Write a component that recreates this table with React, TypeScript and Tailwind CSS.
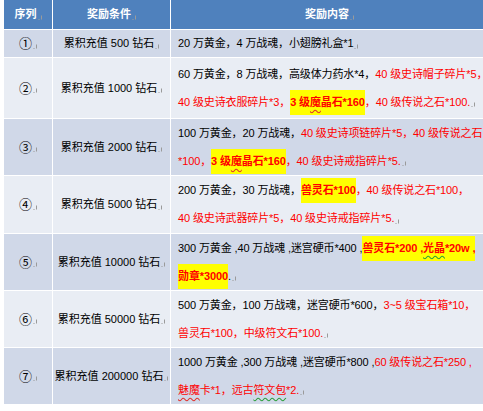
import React from 'react';

type Seg = { t: string; k?: 'r' | 'h'; u?: 'r' | 'g' };

const R = (t: string, u?: 'r' | 'g'): Seg => ({ t, k: 'r', u });
const H = (t: string, u?: 'r' | 'g'): Seg => ({ t, k: 'h', u });
const B = (t: string, u?: 'r' | 'g'): Seg => ({ t, u });

type Row = { no: string; cond: string; lines: Seg[][]; h: string };

const rows: Row[] = [
    { no: '①', cond: '累积充值 500 钻石', h: 'h-[27px]', lines: [[B('20 万黄金，4 万战魂，小翅膀礼盒*1')]] },
    {
        no: '②',
        cond: '累积充值 1000 钻石',
        h: 'h-[60px]',
        lines: [
            [B('60 万黄金，8 万战魂，高级体力药水*4，'), R('40 级史诗帽子碎片*5，')],
            [R('40 级史诗衣服碎片*3，'), H('3 级'), H('魔', 'r'), H('晶石*160'), R('，40 级传说之石*100')],
        ],
    },
    {
        no: '③',
        cond: '累积充值 2000 钻石',
        h: 'h-[56px]',
        lines: [
            [B('100 万黄金，20 万战魂，'), R('40 级史诗项链碎片*5，40 级传说之石')],
            [R('*100，'), H('3 级'), H('魔', 'r'), H('晶石*160'), R('，40 级史诗戒指碎片*5')],
        ],
    },
    {
        no: '④',
        cond: '累积充值 5000 钻石',
        h: 'h-[57px]',
        lines: [
            [B('200 万黄金，30 万战魂，'), H('兽灵石*100'), R('，40 级传说之石*100，')],
            [R('40 级史诗武器碎片*5，40 级史诗戒指碎片*5')],
        ],
    },
    {
        no: '⑤',
        cond: '累积充值 10000 钻石',
        h: 'h-[56px]',
        lines: [
            [B('300 万黄金 ,40 万战魂 ,迷宫硬币*400 ,'), H('兽灵石*200 ,'), H('光晶', 'g'), H('*20w ,')],
            [H('勋章*3000')],
        ],
    },
    {
        no: '⑥',
        cond: '累积充值 50000 钻石',
        h: 'h-[56px]',
        lines: [
            [B('500 万黄金，100 万战魂，迷宫硬币*600，'), R('3~5 级宝石箱*10，')],
            [R('兽灵石*100，中级符文石*100')],
        ],
    },
    {
        no: '⑦',
        cond: '累积充值 200000 钻石',
        h: 'h-[56px]',
        lines: [
            [B('1000 万黄金 ,300 万战魂 ,迷宫硬币*800 ,'), R('60 级传说之石*250 ,')],
            [R('魅魔', 'r'), R('卡*1，远古'), R('符文包', 'g'), R('*2')],
        ],
    },
];

function Mark() {
    return (
        <svg width="4" height="5" viewBox="0 0 4 5" className="ml-px mt-[5px] shrink-0">
            <path d="M3.5 0.5V4.5M0.5 4.5H1.5" stroke="#9a9a9a" strokeWidth="1" fill="none" />
        </svg>
    );
}

function Piece({ s }: { s: Seg }) {
    const under =
        s.u === 'r'
            ? 'underline decoration-wavy decoration-[#e0302a] underline-offset-[3px]'
            : s.u === 'g'
              ? 'underline decoration-wavy decoration-[#2a9d3a] underline-offset-[3px]'
              : '';
    if (s.k === 'h') {
        return <span className={`inline-block h-[25px] leading-[25px] bg-[#ffff00] font-bold text-[#ff0000] ${under}`}>{s.t}</span>;
    }
    if (s.k === 'r') {
        return <span className={`text-[#ff0000] ${under}`}>{s.t}</span>;
    }
    return <span className={under}>{s.t}</span>;
}

export default function App() {
    return (
        <div
            className="w-[483px] h-[411px] overflow-hidden bg-white text-[11px] text-black"
            style={{ fontFamily: '"Liberation Sans", "Noto Sans CJK SC", sans-serif' }}
        >
            <div className="ml-[4px] w-[500px] grid grid-cols-[48px_117px_1fr] gap-px bg-white">
                {/* header */}
                <div className="h-[29px] bg-[#4f81bd] flex items-center justify-center font-bold text-white">
                    序列<Mark />
                </div>
                <div className="h-[29px] bg-[#4f81bd] flex items-center justify-center font-bold text-white">
                    奖励条件<Mark />
                </div>
                <div className="h-[29px] bg-[#4f81bd] flex items-center font-bold text-white pl-[134px]">
                    奖励内容<Mark />
                </div>

                {rows.map((row, i) => {
                    const bg = i % 2 === 0 ? 'bg-[#d0d8e8]' : 'bg-[#e9edf4]';
                    return (
                        <React.Fragment key={row.no}>
                            <div className={`${row.h} ${bg} flex items-center justify-center`}>
                                <span className="text-[13px] leading-none">{row.no}</span>
                                <Mark />
                            </div>
                            <div className={`${row.h} ${bg} flex items-center justify-center whitespace-nowrap`}>
                                {row.cond}
                                <Mark />
                            </div>
                            <div className={`${row.h} ${bg} flex flex-col justify-center pl-[7px] tracking-[-0.12px]`}>
                                {row.lines.map((line, j) => (
                                    <div key={j} className="h-[28px] flex items-center whitespace-pre">
                                        {line.map((s, k) => (
                                            <Piece key={k} s={s} />
                                        ))}
                                        {j === row.lines.length - 1 && (
                                            <>
                                                <span className={line[line.length - 1].k === 'h' ? '' : 'text-[#ff0000]'}>
                                                    {row.lines.length > 1 || i > 0 ? '.' : ''}
                                                </span>
                                                <Mark />
                                            </>
                                        )}
                                    </div>
                                ))}
                            </div>
                        </React.Fragment>
                    );
                })}
            </div>
        </div>
    );
}
